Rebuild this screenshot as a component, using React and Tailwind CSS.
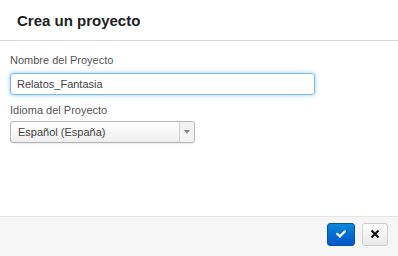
import React from "react";

const CheckIcon = () => (
    <svg width="10" height="8" viewBox="0 0 10 8" fill="none">
        <path d="M1.3 4 L3.9 6.4 L8.8 1.5" stroke="white" strokeWidth="2.2" strokeLinecap="square" />
    </svg>
);

const CloseIcon = () => (
    <svg width="10" height="10" viewBox="0 0 10 10" fill="none">
        <path d="M1.5 1.5 L8.5 8.5 M8.5 1.5 L1.5 8.5" stroke="#111" strokeWidth="2.2" />
    </svg>
);

const App = () => {
    return (
        <div className="w-[398px] h-[256px] bg-white flex flex-col font-['Liberation_Sans',Arial,sans-serif] text-[#333]">
            {/* HEADER */}
            <div className="h-[41px] flex items-center px-[17px] border-b border-[#d9d9d9]">
                <h3 className="text-[15px] font-bold text-[#222] leading-none mt-[1px]">Crea un proyecto</h3>
            </div>

            {/* BODY */}
            <div className="flex-1 px-[10px] pt-[13px] flex flex-col">
                <label className="text-[11px] leading-[13px] text-[#555]">Nombre del Proyecto</label>
                <input
                    type="text"
                    defaultValue="Relatos_Fantasia"
                    className="mt-[6px] w-[305px] h-[22px] px-[6px] text-[11px] text-[#444] rounded-[3px] border border-[#80b6e8] shadow-[0_0_4px_rgba(82,168,236,0.6)] outline-none"
                />
                <label className="mt-[9px] text-[11px] leading-[13px] text-[#555]">Idioma del Proyecto</label>
                <div className="mt-[4px] w-[185px] h-[22px] flex rounded-[3px] border border-[#b5b5b5] bg-gradient-to-b from-white to-[#eeeeee] shadow-[0_1px_1px_rgba(0,0,0,0.08)]">
                    <div className="flex-1 flex items-center px-[7px] text-[11px] text-[#444]">Español (España)</div>
                    <div className="w-[15px] flex items-center justify-center border-l border-[#d0d0d0] bg-[#f3f3f3] rounded-r-[3px]">
                        <div className="w-0 h-0 border-l-[3px] border-r-[3px] border-t-[4px] border-l-transparent border-r-transparent border-t-[#888]" />
                    </div>
                </div>
            </div>

            {/* FOOTER */}
            <div className="h-[40px] bg-[#f5f5f5] border-t border-[#e5e5e5] flex items-center justify-end gap-[7px] pr-[10px] pb-[5px]">
                <button className="w-[28px] h-[23px] flex items-center justify-center rounded-[3px] border border-[#0550b0] bg-gradient-to-b from-[#0a88d8] to-[#0553c8]">
                    <CheckIcon />
                </button>
                <button className="w-[26px] h-[23px] flex items-center justify-center rounded-[3px] border border-[#cfcfcf] bg-gradient-to-b from-white to-[#e8e8e8]">
                    <CloseIcon />
                </button>
            </div>
        </div>
    );
};

export default App;
